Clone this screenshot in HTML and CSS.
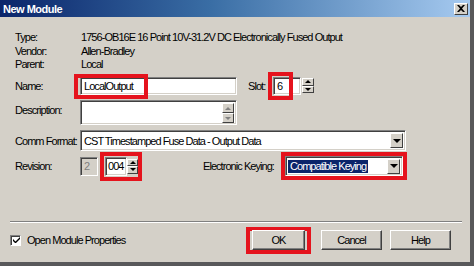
FILE: index.html
```html
<!DOCTYPE html>
<html>
<head>
<meta charset="utf-8">
<link rel="stylesheet" href="styles.css">
</head>
<body>
<div class="window">
  <div class="titlebar">
    <span class="title">New Module</span>
    <span class="close"><svg width="8" height="7" viewBox="0 0 8 7"><path d="M0 0h2l2 2 2-2h2L5 3.5 8 7H6L4 5 2 7H0l3-3.5z" fill="#000"/></svg></span>
  </div>
  <div class="body">
    <div class="form">
      <div class="info">
        <div class="lbl">Type:</div><div class="val">1756-OB16E 16 Point 10V-31.2V DC Electronically Fused Output</div>
        <div class="lbl">Vendor:</div><div class="val">Allen-Bradley</div>
        <div class="lbl">Parent:</div><div class="val">Local</div>
      </div>
      <div class="row name-row">
        <div class="lbl">Name:</div>
        <div class="field name-field"><span class="txt">LocalOutput</span><span class="mark mark-name"></span></div>
        <div class="slot-lbl">Slot:</div>
        <div class="slot">
          <div class="field slot-field"><span class="txt">6</span></div>
          <div class="spin"><span class="sb"><i class="up"></i></span><span class="sb"><i class="dn"></i></span></div>
          <span class="mark mark-slot"></span>
        </div>
      </div>
      <div class="row desc-row">
        <div class="lbl desc-lbl">Description:</div>
        <div class="field desc-field">
          <div class="vscroll"><span class="sb"><i class="up dis"></i></span><span class="track"></span><span class="sb"><i class="dn dis"></i></span></div>
        </div>
      </div>
      <div class="row comm-row">
        <div class="lbl">Comm Format:</div>
        <div class="field combo comm-combo"><span class="txt">CST Timestamped Fuse Data - Output Data</span><span class="ddb"><i class="dn"></i></span></div>
      </div>
      <div class="row rev-row">
        <div class="lbl">Revision:</div>
        <div class="field major"><span class="txt">2</span></div>
        <div class="minor-wrap">
          <div class="field minor"><span class="txt">004</span></div>
          <div class="spin"><span class="sb"><i class="up"></i></span><span class="sb"><i class="dn"></i></span></div>
        </div>
        <div class="key-lbl">Electronic Keying:</div>
        <div class="key-wrap">
          <div class="field combo key-combo"><span class="sel">Compatible Keying</span><span class="ddb"><i class="dn"></i></span></div>
        </div>
      </div>
    </div>
    <div class="sep"></div>
    <div class="footer">
      <label class="chk"><span class="box"><svg width="7" height="7" viewBox="0 0 7 7"><path d="M0 2v2l2 2h1l4-4V0L2.5 4.5z" fill="#000"/></svg></span><span>Open Module Properties</span></label>
      <div class="buttons">
        <div class="ok-wrap"><div class="btn">OK</div></div>
        <div class="btn">Cancel</div>
        <div class="btn">Help</div>
      </div>
    </div>
  </div>
</div>
</body>
</html>
```
FILE: styles.css
```css
* { box-sizing: border-box; }
html, body { margin: 0; padding: 0; background: #d4d0c8; }
body {
  font-family: "Liberation Sans", Arial, sans-serif;
  font-size: 11px;
  letter-spacing: -0.95px;
  color: #000;
  white-space: nowrap;
}
.window {
  width: 474px;
  height: 266px;
  background: #d4d0c8;
  border-right: 4px solid #58585a;
  border-bottom: 4px solid #58585a;
  overflow: hidden;
}
.titlebar {
  height: 17px;
  background: linear-gradient(to right, #0a246a 0%, #3a6ea5 45%, #a6caf0 100%);
  display: flex;
  align-items: center;
  justify-content: space-between;
  padding: 0 2px 0 3px;
}
.title {
  color: #fff;
  font-weight: bold;
  font-size: 11px;
  letter-spacing: -0.5px;
}
.close {
  width: 14px;
  height: 12px;
  background: #d4d0c8;
  border-top: 1px solid #fff;
  border-left: 1px solid #fff;
  border-right: 1px solid #404040;
  border-bottom: 1px solid #404040;
  display: flex;
  align-items: center;
  justify-content: center;
}
.body { padding: 0 10px; }
.form { padding: 14px 0 0 5px; }
.info {
  display: grid;
  grid-template-columns: 66px 1fr;
  line-height: 13.5px;
}
.lbl { width: 65px; flex: none; }
.row { display: flex; align-items: center; }
.field {
  position: relative;
  background: #fff;
  border-top: 1px solid #808080;
  border-left: 1px solid #808080;
  border-right: 1px solid #fff;
  border-bottom: 1px solid #fff;
  box-shadow: inset 1px 1px 0 #404040, inset -1px -1px 0 #d4d0c8;
  display: flex;
  align-items: center;
  flex: none;
}
.txt { padding-left: 3px; }
.mark {
  position: absolute;
  border: 4px solid #e5131d;
  pointer-events: none;
}
.name-row { height: 27px; margin-top: 0.5px; }
.name-field { width: 157px; height: 18px; }
.mark-name { left: -7px; top: -4px; width: 74px; height: 25px; }
.slot-lbl { margin-left: 11px; width: 25px; }
.slot { position: relative; display: flex; align-items: center; }
.slot-field { width: 28px; height: 18px; }
.mark-slot { left: -5px; top: -5px; width: 25px; height: 28px; }
.spin { display: flex; flex-direction: column; width: 12px; height: 15px; margin-left: 1px; flex: none; }
.sb {
  flex: 1;
  background: #d4d0c8;
  border-top: 1px solid #fff;
  border-left: 1px solid #fff;
  border-right: 1px solid #404040;
  border-bottom: 1px solid #404040;
  display: flex;
  align-items: center;
  justify-content: center;
}
.up, .dn { display: block; width: 0; height: 0; border-left: 3px solid transparent; border-right: 3px solid transparent; }
.up { border-bottom: 3px solid #000; }
.dn { border-top: 3px solid #000; }
.up.dis { border-bottom-color: #808080; }
.dn.dis { border-top-color: #808080; }
.desc-row { align-items: flex-start; margin-top: 1px; }
.desc-lbl { padding-top: 4px; }
.desc-field { width: 157px; height: 25px; justify-content: flex-end; align-items: stretch; padding: 2px; }
.vscroll { width: 12px; display: flex; flex-direction: column; }
.vscroll .sb { flex: none; height: 10px; }
.vscroll .track { flex: 1; background: #e8e6e2; }
.comm-row { margin-top: 5px; }
.combo { height: 21px; justify-content: space-between; padding: 2px; }
.comm-combo { width: 326px; }
.combo .txt { padding-left: 1px; }
.ddb {
  width: 13px;
  height: 15px;
  background: #d4d0c8;
  border-top: 1px solid #fff;
  border-left: 1px solid #fff;
  border-right: 1px solid #404040;
  border-bottom: 1px solid #404040;
  display: flex;
  align-items: center;
  justify-content: center;
  flex: none;
}
.ddb .dn { border-left-width: 4px; border-right-width: 4px; border-top-width: 4px; }
.rev-row { height: 30px; }
.major { width: 18px; height: 19px; background: #d4d0c8; color: #808080; }
.minor-wrap {
  display: flex;
  align-items: center;
  margin-left: 2px;
  padding: 0 0 0 1px;
  height: 29px;
  width: 42px;
  border: 4px solid #e5131d;
  flex: none;
  overflow: hidden;
}
.minor { width: 22px; height: 19px; }
.minor .txt { padding-left: 2px; }
.minor-wrap .spin { width: 11px; margin-left: 0; }
.key-lbl { margin-left: 61px; width: 78px; flex: none; }
.key-wrap {
  height: 28px;
  border: 4px solid #e5131d;
  display: flex;
  align-items: center;
  justify-content: center;
  width: 126px;
  flex: none;
}
.key-combo { width: 118px; height: 20px; padding: 2px; }
.sel { background: #0a246a; color: #fff; padding: 0 2px; line-height: 13px; flex: none; }
.sep {
  margin-top: 40px;
  height: 2px;
  border-top: 1px solid #808080;
  border-bottom: 1px solid #fff;
  width: 452px;
}
.footer {
  display: flex;
  align-items: center;
  justify-content: space-between;
  height: 34px;
  padding-right: 9px;
}
.chk { display: flex; align-items: center; gap: 6px; }
.box {
  width: 11px; height: 11px;
  background: #fff;
  border-top: 1px solid #808080;
  border-left: 1px solid #808080;
  border-right: 1px solid #fff;
  border-bottom: 1px solid #fff;
  box-shadow: inset 1px 1px 0 #404040;
  display: flex; align-items: center; justify-content: center;
  padding: 1px 0 0 1px;
}
.buttons { display: flex; align-items: center; gap: 8px; }
.ok-wrap { border: 4px solid #e5131d; padding: 0 2px; height: 27px; display: flex; align-items: center; margin-right: 2px; }
.btn {
  width: 61px;
  height: 20px;
  background: #d4d0c8;
  border-top: 1px solid #fff;
  border-left: 1px solid #fff;
  border-right: 1px solid #404040;
  border-bottom: 1px solid #404040;
  box-shadow: inset -1px -1px 0 #808080;
  display: flex; align-items: center; justify-content: center;
}
.ok-wrap .btn { width: 53px; }
```
